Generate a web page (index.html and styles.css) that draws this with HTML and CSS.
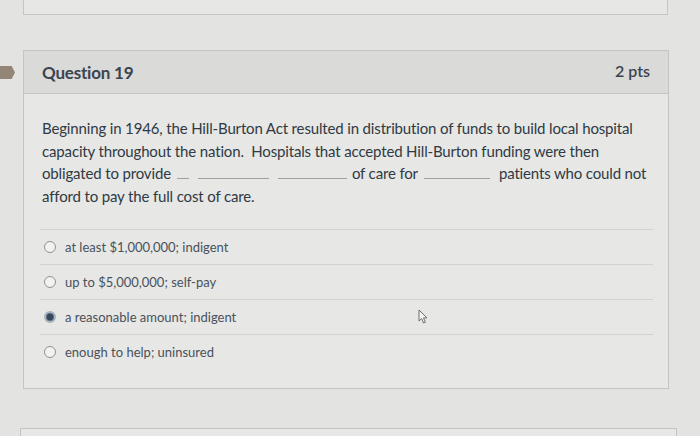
FILE: index.html
```html
<!DOCTYPE html>
<html>
<head>
<meta charset="utf-8">
<link rel="stylesheet" href="styles.css">
</head>
<body>
<div class="page">
  <div class="prev-card"></div>
  <div class="question-wrap">
    <div class="marker"></div>
    <div class="card">
      <div class="card-header">
        <h2 class="q-title">Question 19</h2>
        <span class="q-points">2 pts</span>
      </div>
      <div class="card-body">
        <p class="q-text">Beginning in 1946, the Hill-Burton Act resulted in distribution of funds to build local hospital capacity throughout the nation.&nbsp; Hospitals that accepted Hill-Burton funding were then obligated to provide<span class="blank b1"></span><span class="blank b2"></span><span class="blank b3"></span>of care for<span class="blank b4"></span>patients who could not afford to pay the full cost of care.</p>
        <ul class="answers">
          <li class="answer"><span class="radio"></span><span class="a-text">at least $1,000,000; indigent</span></li>
          <li class="answer"><span class="radio"></span><span class="a-text">up to $5,000,000; self-pay</span></li>
          <li class="answer"><span class="radio checked"></span><span class="a-text">a reasonable amount; indigent</span>
            <svg class="cursor" width="11" height="15" viewBox="0 0 11 15"><path d="M1 1 L1 12 L3.6 9.6 L5.6 14 L7.4 13.2 L5.5 8.9 L9 8.9 Z" fill="#f4f4f4" stroke="#6d6d6d" stroke-width="1"/></svg>
          </li>
          <li class="answer"><span class="radio"></span><span class="a-text">enough to help; uninsured</span></li>
        </ul>
      </div>
    </div>
  </div>
  <div class="next-card"></div>
</div>
</body>
</html>
```
FILE: styles.css
```css
* { box-sizing: border-box; }
html, body {
  margin: 0;
  padding: 0;
  background: #e3e3e1;
  font-family: Lato, "Open Sans", sans-serif;
  color: #2d3b45;
}
.page {
  width: 700px;
  height: 436px;
  overflow: hidden;
  display: flex;
  flex-direction: column;
}
.page > * { flex-shrink: 0; }
.prev-card {
  margin-left: 23px;
  width: 645px;
  height: 15px;
  border: 1px solid #c6c6c4;
  border-top: none;
  background: #e7e7e5;
}
.question-wrap {
  position: relative;
  margin-top: 35px;
  padding-left: 23px;
}
.marker {
  position: absolute;
  left: 0;
  top: 16px;
  width: 15px;
  height: 13px;
  background: #948676;
  clip-path: polygon(0 0, 78% 0, 100% 50%, 78% 100%, 0 100%);
}
.card {
  width: 646px;
  height: 339px;
  border: 1px solid #c4c4c2;
  background: #e7e7e5;
}
.card-header {
  height: 43px;
  background: #dadad8;
  border-bottom: 1px solid #c4c4c2;
  display: flex;
  align-items: center;
  justify-content: space-between;
  padding: 0 18px 0 18px;
}
.q-title {
  margin: 0;
  font-size: 17px;
  font-weight: 700;
  color: #3a4450;
  letter-spacing: -0.2px;
}
.q-points {
  font-size: 16px;
  font-weight: 600;
  color: #3a4450;
  margin-top: -4px;
}
.card-body {
  padding: 23px 16px 0 18px;
}
.q-text {
  margin: 0;
  font-size: 15px;
  line-height: 22.6px;
  color: #2f3a44;
  letter-spacing: -0.15px;
}
.blank {
  display: inline-block;
  height: 12px;
  border-bottom: 1px solid #a0a0a0;
  vertical-align: baseline;
}
.b1 { width: 12px; margin-left: 6px; }
.b2 { width: 71px; margin-left: 9px; }
.b3 { width: 69px; margin-left: 9px; margin-right: 5px; }
.b4 { width: 66px; margin-left: 6px; margin-right: 9px; }
.answers {
  list-style: none;
  margin: 22px 0 0 -2px;
  padding: 0;
  width: 613px;
}
.answer {
  position: relative;
  height: 35px;
  border-top: 1px solid #d2d2d0;
  display: flex;
  align-items: center;
  padding-left: 4px;
  gap: 9px;
  font-size: 13px;
  color: #48525c;
}
.radio {
  width: 12px;
  height: 12px;
  border-radius: 50%;
  border: 1px solid #8e9399;
  background: #f2f2f0;
}
.radio.checked {
  border: 2px solid #a7b3be;
  background: radial-gradient(circle, #35485c 0 3px, #5f7184 3.6px);
}
.cursor {
  position: absolute;
  left: 378px;
  top: 9px;
}
.next-card {
  margin-top: 39px;
  margin-left: 20px;
  width: 657px;
  height: 20px;
  border: 1px solid #c4c4c2;
  border-bottom: none;
  background: #e7e7e5;
}
```
